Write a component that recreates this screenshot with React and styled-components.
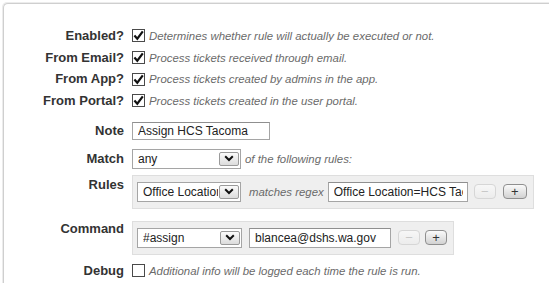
import styled, { createGlobalStyle } from "styled-components"

const GlobalStyle = createGlobalStyle`
    html, body {
        margin: 0;
        padding: 0;
        background: #ffffff;
        overflow: hidden;
    }

    body {
        font-family: "Liberation Sans", Arial, sans-serif;
        color: #333333;
    }
`

const flags = [
    { label: "Enabled?", text: "Determines whether rule will actually be executed or not." },
    { label: "From Email?", text: "Process tickets received through email." },
    { label: "From App?", text: "Process tickets created by admins in the app." },
    { label: "From Portal?", text: "Process tickets created in the user portal." },
]

function Check({ checked }) {
    return (
        <CheckBox>
            {checked && (
                <svg width="11" height="11" viewBox="0 0 11 11">
                    <path d="M1.4 5.4 L4.3 8.7 L9.8 1.4" fill="none" stroke="#111" strokeWidth="2.2" />
                </svg>
            )}
        </CheckBox>
    )
}

function Select({ value, width }) {
    return (
        <SelectBox $width={width}>
            <SelectText>{value}</SelectText>
            <Arrow>
                <svg width="10" height="7" viewBox="0 0 10 7">
                    <path d="M1.2 1.3 L5 5 L8.8 1.3" fill="none" stroke="#111" strokeWidth="2" />
                </svg>
            </Arrow>
        </SelectBox>
    )
}

export default function App() {
    return (
        <>
            <GlobalStyle />
            <Panel>
                {flags.map((f) => (
                    <FlagRow key={f.label}>
                        <Label>{f.label}</Label>
                        <Field>
                            <Check checked />
                            <Hint>{f.text}</Hint>
                        </Field>
                    </FlagRow>
                ))}

                <Row $top={10}>
                    <Label>Note</Label>
                    <Field>
                        <TextInput $width={138} $height={18}>
                            <InputText>Assign HCS Tacoma</InputText>
                        </TextInput>
                    </Field>
                </Row>

                <Row $top={9}>
                    <Label>Match</Label>
                    <Field>
                        <Select value="any" width={109} />
                        <Hint $left={4}>of the following rules:</Hint>
                    </Field>
                </Row>

                <Row $top={6} $start>
                    <Label $pad={2}>Rules</Label>
                    <Field>
                        <Group>
                            <Select value="Office Location" width={104} />
                            <Hint $left={8}>matches regex</Hint>
                            <TextInput $width={140} $height={20} $left={4}>
                                <InputText>Office Location=HCS Tacoma</InputText>
                            </TextInput>
                            <SmallButton disabled $left={6}>−</SmallButton>
                            <SmallButton $left={7} $wide>+</SmallButton>
                        </Group>
                    </Field>
                </Row>

                <Row $top={12} $start>
                    <Label $pad={0}>Command</Label>
                    <Field>
                        <Group>
                            <Select value="#assign" width={105} />
                            <TextInput $width={142} $height={20} $left={7}>
                                <InputText>blancea@dshs.wa.gov</InputText>
                            </TextInput>
                            <SmallButton disabled $left={7}>−</SmallButton>
                            <SmallButton $left={5}>+</SmallButton>
                        </Group>
                    </Field>
                </Row>

                <Row $top={8}>
                    <Label>Debug</Label>
                    <Field>
                        <Check />
                        <Hint>Additional info will be logged each time the rule is run.</Hint>
                    </Field>
                </Row>
            </Panel>
        </>
    )
}

const Panel = styled.div`
    width: 620px;
    height: 320px;
    margin: 3px 0 0 3px;
    padding-top: 21px;

    border: 1px solid #cfcfcf;
    border-right: 0;
    border-bottom: 0;
    border-radius: 5px 0 0 0;
    box-shadow: -1px -1px 0 #ececec;

    background: #ffffff;
`

const Row = styled.div`
    display: grid;
    grid-template-columns: 120px 1fr;
    column-gap: 8px;
    align-items: ${(p) => (p.$start ? "start" : "center")};

    margin-top: ${(p) => p.$top || 0}px;
`

const FlagRow = styled(Row)`
    height: 21.7px;
`

const Label = styled.div`
    text-align: right;
    padding-top: ${(p) => p.$pad || 0}px;

    font-weight: 700;
    font-size: 13px;
    line-height: 16px;

    color: #333333;
`

const Field = styled.div`
    display: flex;
    align-items: center;
    min-width: 0;
`

const CheckBox = styled.span`
    width: 13px;
    height: 13px;
    box-sizing: border-box;
    flex: none;

    display: flex;
    align-items: center;
    justify-content: center;

    margin-right: 4px;

    border: 1px solid #4a4a4a;
    background: #ffffff;
`

const Hint = styled.span`
    margin-left: ${(p) => p.$left || 0}px;

    font-style: italic;
    font-size: 11.4px;
    white-space: nowrap;

    color: #6a6a6a;
`

const TextInput = styled.div`
    width: ${(p) => p.$width}px;
    height: ${(p) => p.$height}px;
    box-sizing: border-box;
    flex: none;

    display: flex;
    align-items: center;

    margin-left: ${(p) => p.$left || 0}px;
    padding: 0 4px 0 5px;

    font-size: 12px;

    border: 1px solid #a5a5a5;
    border-top-color: #8f8f8f;
    background: #ffffff;
    color: #222222;
`

const InputText = styled.span`
    display: block;
    width: 100%;
    overflow: hidden;
    white-space: nowrap;
`

const SelectBox = styled.div`
    width: ${(p) => p.$width}px;
    height: 20px;
    box-sizing: border-box;
    flex: none;
    position: relative;

    display: flex;
    align-items: center;

    padding-left: 5px;

    font-size: 12px;
    color: #222222;

    border: 1px solid #a5a5a5;
    background: #ffffff;
`

const SelectText = styled.span`
    display: block;
    width: calc(100% - 22px);
    overflow: hidden;
    white-space: nowrap;
`

const Arrow = styled.span`
    position: absolute;
    right: 1px;
    top: 2px;

    width: 20px;
    height: 14px;
    box-sizing: border-box;

    display: flex;
    align-items: center;
    justify-content: center;

    border: 1px solid #9a9a9a;
    border-radius: 2px;
    background: linear-gradient(#fbfbfb, #dcdcdc);
`

const Group = styled.div`
    display: inline-flex;
    align-items: center;

    padding: 6px 6px 6px 4px;

    border: 1px solid #dedede;
    background: #efefef;
`

const SmallButton = styled.button`
    width: ${(p) => (p.$wide ? 24 : 22)}px;
    height: 15px;
    flex: none;

    display: flex;
    align-items: center;
    justify-content: center;

    margin-left: ${(p) => p.$left || 0}px;
    padding: 0;

    font-family: "Liberation Sans", Arial, sans-serif;
    font-size: 13px;
    line-height: 1;

    border: 1px solid #8f8f8f;
    border-radius: 4px;
    background: linear-gradient(#fafafa, #d2d2d2);
    color: #333333;

    &:disabled {
        border-color: #d6d6d6;
        background: linear-gradient(#f7f7f7, #ececec);
        color: #c8c8c8;
    }
`
